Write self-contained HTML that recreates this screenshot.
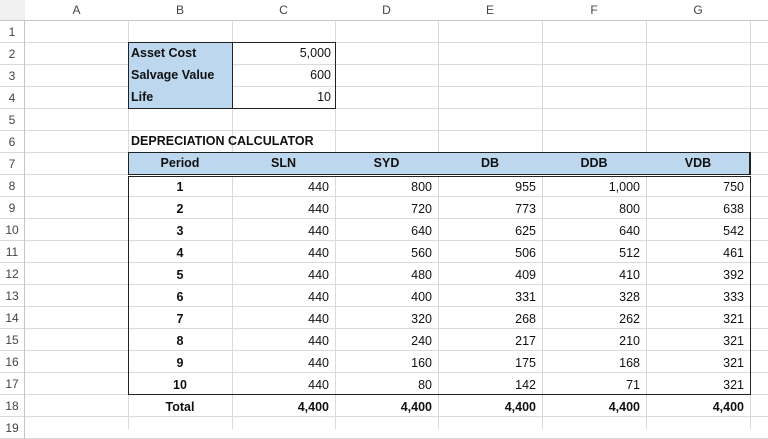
<!DOCTYPE html>
<html><head><style>
body{margin:0;width:768px;height:429px;overflow:hidden;background:#fff;font-family:"Liberation Sans",Arial,sans-serif;position:relative}
.hd{position:absolute;top:0;height:20px;background:#fff;border-bottom:1px solid #c6c6c6;color:#444;font-size:12px;text-align:center;line-height:20px}
.rh{position:absolute;left:0;width:24px;border-right:1px solid #c6c6c6;color:#444;font-size:12px;text-align:center;line-height:22px;height:22px}
.vl{position:absolute;top:0;width:1px;height:429px;background:#dadada}
.hl{position:absolute;left:0;height:1px;width:768px;background:#dadada}
.c{position:absolute;height:22px;line-height:23px;font-size:12.5px;color:#111;white-space:nowrap}
.r{text-align:right}.m{text-align:center}.b{font-weight:bold}
.bx{position:absolute;border:1px solid #222;box-sizing:border-box}
</style></head><body>
<!-- gridlines -->
<div class="vl" style="left:128px"></div><div class="vl" style="left:232px"></div><div class="vl" style="left:335px"></div><div class="vl" style="left:438px"></div><div class="vl" style="left:542px"></div><div class="vl" style="left:646px"></div><div class="vl" style="left:750px"></div>
<div id="hls"></div>
<script>
var s='';for(var n=1;n<=19;n++){s+='<div class="hl" style="top:'+(20+22*n)+'px"></div>';}
document.getElementById('hls').innerHTML=s;
</script>
<!-- blue fills -->
<div style="position:absolute;left:129px;top:42px;width:103px;height:66px;background:#bdd7ee"></div>
<div style="position:absolute;left:129px;top:152px;width:621px;height:22px;background:#bdd7ee"></div>
<!-- boxes -->
<div class="bx" style="left:128px;top:42px;width:208px;height:67px"></div>
<div style="position:absolute;left:232px;top:42px;width:1px;height:66px;background:#222"></div>
<div class="bx" style="left:128px;top:152px;width:623px;height:23px;border-width:1px 2px 1px 1px"></div>
<div style="position:absolute;left:128px;top:174px;width:623px;height:3px;border-top:1px solid #222;border-bottom:1px solid #222;box-sizing:border-box;background:#fff"></div>
<div class="bx" style="left:128px;top:176px;width:623px;height:219px"></div>
<!-- column headers -->
<div class="hd" style="left:0;width:25px;background:#f0f0f0"></div>
<div class="hd" style="left:25px;width:103px">A</div><div class="hd" style="left:128px;width:104px">B</div><div class="hd" style="left:232px;width:103px">C</div><div class="hd" style="left:335px;width:103px">D</div><div class="hd" style="left:438px;width:104px">E</div><div class="hd" style="left:542px;width:104px">F</div><div class="hd" style="left:646px;width:104px">G</div><div class="hd" style="left:750px;width:18px"></div>
<div id="rows"></div>
<script>
var h='';for(var n=1;n<=19;n++){h+='<div class="rh" style="top:'+(21+22*(n-1))+'px">'+n+'</div>';}
h+='<div class="c b" style="left:131px;top:42px">Asset Cost</div><div class="c r" style="left:232px;width:99px;top:42px">5,000</div>';
h+='<div class="c b" style="left:131px;top:64px">Salvage Value</div><div class="c r" style="left:232px;width:99px;top:64px">600</div>';
h+='<div class="c b" style="left:131px;top:86px">Life</div><div class="c r" style="left:232px;width:99px;top:86px">10</div>';
h+='<div class="c b" style="left:131px;top:130px">DEPRECIATION CALCULATOR</div>';
var L=[128,232,335,438,542,646,750];
var hdr=['Period','SLN','SYD','DB','DDB','VDB'];
for(var i=0;i<6;i++){h+='<div class="c b m" style="left:'+L[i]+'px;width:'+(L[i+1]-L[i])+'px;top:152px">'+hdr[i]+'</div>';}
var d=[[440,800,955,'1,000',750],[440,720,773,800,638],[440,640,625,640,542],[440,560,506,512,461],[440,480,409,410,392],[440,400,331,328,333],[440,320,268,262,321],[440,240,217,210,321],[440,160,175,168,321],[440,80,142,71,321]];
for(var r=0;r<10;r++){var t=174+22*r+2;h+='<div class="c b m" style="left:128px;width:104px;top:'+t+'px">'+(r+1)+'</div>';
for(var j=0;j<5;j++){h+='<div class="c r" style="left:'+L[j+1]+'px;width:'+(L[j+2]-L[j+1]-6)+'px;top:'+t+'px">'+d[r][j]+'</div>';}}
h+='<div class="c b m" style="left:128px;width:104px;top:396px">Total</div>';
for(var j=0;j<5;j++){h+='<div class="c b r" style="left:'+L[j+1]+'px;width:'+(L[j+2]-L[j+1]-6)+'px;top:396px">4,400</div>';}
document.getElementById('rows').innerHTML=h;
</script>
</body></html>
